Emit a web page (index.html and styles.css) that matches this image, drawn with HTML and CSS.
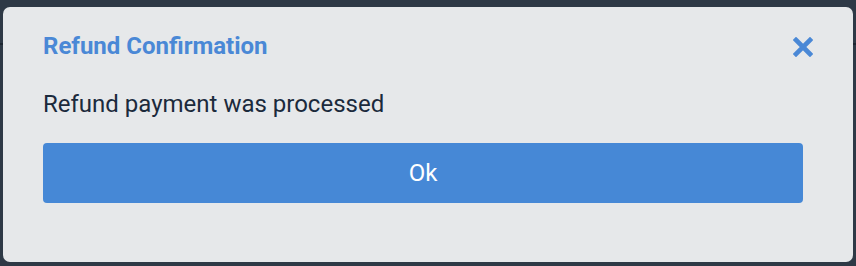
FILE: index.html
```html
<!DOCTYPE html>
<html lang="en">
<head>
<meta charset="utf-8">
<title>Refund Confirmation</title>
<link rel="stylesheet" href="styles.css">
</head>
<body>
<div class="backdrop">
  <div class="dialog" role="dialog" aria-labelledby="dlg-title">
    <div class="dialog-header">
      <h2 id="dlg-title" class="dialog-title">Refund Confirmation</h2>
      <button class="close-btn" aria-label="Close">
        <svg width="20" height="20" viewBox="0 0 20 20" aria-hidden="true">
          <path d="M3 3 L17 17 M17 3 L3 17" stroke="#4a88d6" stroke-width="4.6" stroke-linecap="square" fill="none"/>
        </svg>
      </button>
    </div>
    <p class="dialog-message">Refund payment was processed</p>
    <button class="ok-btn">Ok</button>
  </div>
</div>
</body>
</html>
```

FILE: styles.css
```css
* { box-sizing: border-box; }
html, body { margin: 0; padding: 0; }
body {
  width: 856px;
  height: 266px;
  overflow: hidden;
  background: linear-gradient(to bottom, #2e3946 0, #2e3946 43px, #1d2631 43px, #1d2631 45px, #2e3946 45px);
  font-family: Roboto, "Noto Sans", "Liberation Sans", sans-serif;
}
.backdrop {
  padding: 7px 3px 4px 3px;
  height: 266px;
}
.dialog {
  background: #e6e8ea;
  border-radius: 7px;
  height: 255px;
  padding: 25px 40px 0 40px;
  display: flex;
  flex-direction: column;
}
.dialog-header {
  display: flex;
  align-items: center;
  justify-content: space-between;
  height: 28px;
}
.dialog-title {
  margin: 0;
  font-size: 24px;
  font-weight: 700;
  color: #4a88d6;
  line-height: 28px;
}
.close-btn {
  border: 0;
  background: none;
  padding: 0;
  width: 20px;
  height: 20px;
  margin-top: 2px;
  display: flex;
  cursor: pointer;
}
.dialog-message {
  margin: 30px 0 0 0;
  font-size: 24px;
  line-height: 28px;
  color: #1b2a3c;
}
.ok-btn {
  margin-top: 25px;
  width: 760px;
  height: 60px;
  border: 0;
  border-radius: 4px;
  background: #4688d6;
  color: #ffffff;
  font-family: inherit;
  font-size: 24px;
  cursor: pointer;
}
```
